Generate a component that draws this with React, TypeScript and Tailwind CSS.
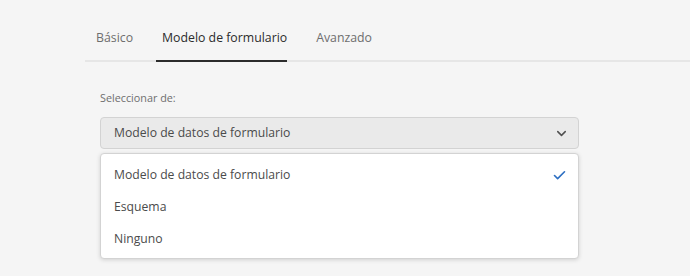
import { ChevronDown, Check } from "lucide-react";

const tabs = ["Básico", "Modelo de formulario", "Avanzado"];
const options = ["Modelo de datos de formulario", "Esquema", "Ninguno"];

export default function App() {
    return (
        <div className="w-[690px] h-[276px] bg-[#f5f5f5] overflow-hidden" style={{ fontFamily: '"Open Sans", "Noto Sans", sans-serif' }}>
            <div className="ml-[85px] flex gap-[29px] pl-[11px] pt-[24px] border-b-2 border-[#e6e6e6] text-[12.3px] text-[#4b4b4b]">
                {tabs.map((t, i) => (
                    <div
                        key={t}
                        className={
                            i === 1
                                ? "relative h-[36px] leading-[28px] text-[#2c2c2c] after:absolute after:-left-[6px] after:right-0 after:-bottom-[2px] after:h-[2px] after:bg-[#2c2c2c]"
                                : "h-[36px] leading-[28px] text-[#6e6e6e]"
                        }
                    >
                        {t}
                    </div>
                ))}
            </div>
            <div className="ml-[100px] w-[479px] pt-[26px]">
                <p className="text-[10.8px] text-[#6e6e6e] leading-[20px]">Seleccionar de:</p>
                <div className="mt-[9px] h-[32px] flex items-center justify-between pl-[13px] pr-[9px] bg-[#eaeaea] border border-[#d3d3d3] rounded-[4px] text-[12.2px] text-[#4b4b4b]">
                    <span>Modelo de datos de formulario</span>
                    <ChevronDown size={15} strokeWidth={2.4} className="text-[#505050]" />
                </div>
                <div className="mt-[4px] bg-white border border-[#d3d3d3] rounded-[4px] shadow-[0_1px_4px_rgba(0,0,0,0.15)] pt-[5px] pb-[3px]">
                    {options.map((o, i) => (
                        <div key={o} className="h-[32px] flex items-center justify-between pl-[13px] pr-[11px] text-[12.2px] text-[#4b4b4b]">
                            <span>{o}</span>
                            {i === 0 && <Check size={15} strokeWidth={2.6} className="text-[#2d6fc2]" />}
                        </div>
                    ))}
                </div>
            </div>
        </div>
    );
}
